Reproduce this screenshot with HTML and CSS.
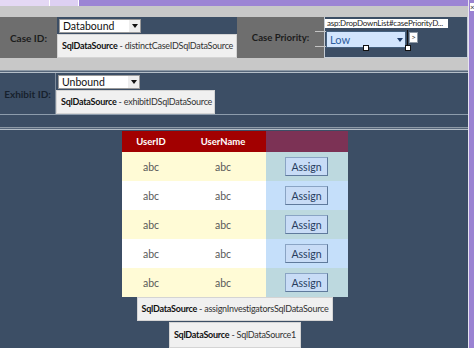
FILE: index.html
```html
<!DOCTYPE html>
<html lang="en">
<head>
    <meta charset="UTF-8">
    <meta name="viewport" content="width=device-width, initial-scale=1.0">
    <title>Assign Investigators</title>
    <link rel="stylesheet" href="styles.css">
</head>
<body>

    <div class="frame">
        <div class="canvas">
            <div class="tabs">
                <div class="tab first"></div>
                <div class="tab second"></div>
                <div class="tab rest"></div>
            </div>
            <div class="band top"></div>

            <div class="row case">
                <div class="label case-id">Case ID:</div>
                <div class="cell case-cell">
                    <div class="dropdown">
                        <span>Databound</span>
                        <span class="arrow"></span>
                    </div>
                    <div class="source wide">
                        <b>SqlDataSource</b> - distinctCaseIDSqlDataSource
                    </div>
                </div>
                <div class="label priority">Case Priority:</div>
                <div class="cell priority-cell">
                    <div class="tag">asp:DropDownList#casePriorityD...</div>
                    <div class="picked">
                        <div class="dropdown selected">
                            <span>Low</span>
                            <span class="arrow"></span>
                        </div>
                        <div class="smart">&gt;</div>
                        <span class="guide g1"></span>
                        <span class="guide g2"></span>
                        <span class="guide g3"></span>
                        <span class="handle h1"></span>
                        <span class="handle h2"></span>
                    </div>
                </div>
            </div>

            <div class="band mid"></div>
            <div class="rule"></div>

            <div class="row exhibit">
                <div class="label exhibit-id">Exhibit ID:</div>
                <div class="cell exhibit-cell">
                    <div class="dropdown">
                        <span>Unbound</span>
                        <span class="arrow"></span>
                    </div>
                    <div class="source">
                        <b>SqlDataSource</b> - exhibitIDSqlDataSource
                    </div>
                </div>
            </div>

            <div class="line"></div>
            <div class="gap"></div>
            <div class="rule"></div>

            <div class="grid-area">
                <div class="grid-wrap">
                    <table class="grid">
                        <thead>
                            <tr>
                                <th class="c1">UserID</th>
                                <th class="c2">UserName</th>
                                <th class="c3"></th>
                            </tr>
                        </thead>
                        <tbody>
                            <tr class="odd"><td>abc</td><td>abc</td><td class="act"><button>Assign</button></td></tr>
                            <tr class="even"><td>abc</td><td>abc</td><td class="act"><button>Assign</button></td></tr>
                            <tr class="odd"><td>abc</td><td>abc</td><td class="act"><button>Assign</button></td></tr>
                            <tr class="even"><td>abc</td><td>abc</td><td class="act"><button>Assign</button></td></tr>
                            <tr class="odd"><td>abc</td><td>abc</td><td class="act"><button>Assign</button></td></tr>
                        </tbody>
                    </table>
                    <div class="source grid-source">
                        <b>SqlDataSource</b> - assignInvestigatorsSqlDataSource
                    </div>
                    <div class="source last-source">
                        <b>SqlDataSource</b> - SqlDataSource1
                    </div>
                </div>
            </div>
        </div>
        <div class="edge">
            <div class="close">×</div>
        </div>
    </div>

</body>
</html>
```

FILE: styles.css
```css
body { margin: 0; padding: 0; background-color: #3c4e65; font-family: Lato, "Open Sans", sans-serif; font-size: 10px; color: #222; }
.frame { display: flex; width: 474px; height: 348px; overflow: hidden; }
.canvas { width: 468px; display: flex; flex-direction: column; }
.edge { flex: 1; background: #9a82d2; border-left: 1px solid #e8e4f0; position: relative; }
.close { position: absolute; top: 3px; left: 1px; width: 5px; height: 8px; background: #fff; font-size: 8px; line-height: 8px; color: #333; overflow: hidden; }

.tabs { display: flex; height: 6px; }
.tab { height: 6px; }
.tab.first { width: 49px; background: #e4d8f4; border-right: 1px solid #fff; }
.tab.second { width: 28px; background: #ddd0f2; border-right: 1px solid #fff; }
.tab.rest { flex: 1; background: #9c84d4; }

.band { background: #c8c8c8; }
.band.top { height: 11px; }
.band.mid { height: 12px; }
.rule { height: 1px; border-top: 1px solid #8e9aa7; border-bottom: 1px solid #b4bec8; background: #56667a; }

.row { display: flex; height: 41px; }
.label { display: flex; align-items: center; justify-content: center; font-weight: bold; font-size: 10px; color: #1c1c1c; white-space: nowrap; }
.label.case-id { width: 57px; background: #6e6e6e; }
.label.priority { width: 87px; background: #6e6e6e; font-size: 9.6px; }
.label.exhibit-id { width: 55px; border-right: 1px solid #7d8b9b; color: #17212d; }

.cell { display: flex; flex-direction: column; }
.case-cell { width: 180px; }
.exhibit-cell { width: 180px; }
.priority-cell { flex: 1; border: 1px solid #c3cbd4; border-top: none; height: 40px; position: relative; }

.dropdown { display: flex; justify-content: space-between; align-items: center; width: 78px; height: 12px; margin: 2px 0 0 2px; background: #fff; border: 1px solid #9a9a9a; font-size: 10.5px; line-height: 12px; padding-left: 2px; box-sizing: content-box; color: #111; }
.dropdown span:first-child { padding-left: 1px; }
.arrow { width: 11px; height: 12px; background: #eee; display: flex; align-items: center; justify-content: center; }
.arrow::after { content: ""; border-left: 3px solid transparent; border-right: 3px solid transparent; border-top: 4px solid #111; }

.source { background: #f0f0f0; border: 1px solid #d4d4d4; white-space: nowrap; font-size: 9px; letter-spacing: -0.25px; padding: 0 4px; height: 22px; line-height: 22px; margin-top: 1px; color: #333; }
.source.wide { width: 170px; }
.source b { font-weight: bold; color: #111; }
.exhibit-cell .source { width: 149px; }

.tag { background: #fff; font-size: 8px; letter-spacing: -0.2px; line-height: 9px; height: 9px; width: 121px; padding-left: 2px; margin-top: 2px; white-space: nowrap; overflow: hidden; color: #222; }
.picked { position: relative; margin-top: 2px; display: flex; align-items: flex-start; }
.dropdown.selected { width: 76px; height: 15px; background: #d2e5fd; border: 1px solid #44607e; color: #2d5fa0; font-size: 11px; margin: 1px 0 0 1px; }
.dropdown.selected .arrow { background: transparent; }
.dropdown.selected .arrow::after { border-top-color: #1d3c6a; }
.smart { width: 7px; height: 9px; margin: 2px 0 0 3px; background: #fff; border: 1px solid #8d99a6; font-size: 8px; line-height: 9px; text-align: center; color: #333; }
.guide { position: absolute; background: #c4c4c4; }
.guide.g1 { left: -10px; top: 1px; width: 11px; height: 1px; }
.guide.g2 { left: -10px; top: 16px; width: 11px; height: 1px; }
.guide.g3 { left: 82px; top: 0; width: 1px; height: 21px; background: #111; }
.handle { position: absolute; width: 4px; height: 4px; background: #fff; border: 1px solid #111; }
.handle.h1 { left: 38px; top: 15px; }
.handle.h2 { left: 80px; top: 15px; }

.line { height: 1px; background: #8d9cac; }
.gap { height: 12px; }

.grid-area { padding: 1px 0 0 122px; }
.grid-wrap { width: 226px; display: flex; flex-direction: column; align-items: center; }
.grid { border-collapse: collapse; width: 226px; }
.grid th { height: 21px; padding: 0; color: #fff; font-weight: bold; font-size: 9.5px; background: #a20000; }
.grid th.c1 { width: 58px; }
.grid th.c2 { width: 86px; }
.grid th.c3 { background: #7c3255; }
.grid td { height: 29px; padding: 0; text-align: center; color: #595959; font-size: 10.5px; }
.grid tr.odd td { background: #fffbd6; }
.grid tr.even td { background: #fff; }
.grid tr.odd td.act { background: #bdd9df; }
.grid tr.even td.act { background: #c5dffa; }
.grid button { font-family: Lato, "Open Sans", sans-serif; font-size: 10.5px; color: #273c5e; background: #c8dcf6; border: 1px solid #8aa4c4; border-bottom-color: #5f7a9c; border-right-color: #5f7a9c; width: 43px; height: 19px; padding: 0; margin-left: -1px; }

.source.grid-source { margin-top: 0; width: auto; }
.source.last-source { margin-top: 1px; height: 24px; line-height: 24px; width: auto; }
```
